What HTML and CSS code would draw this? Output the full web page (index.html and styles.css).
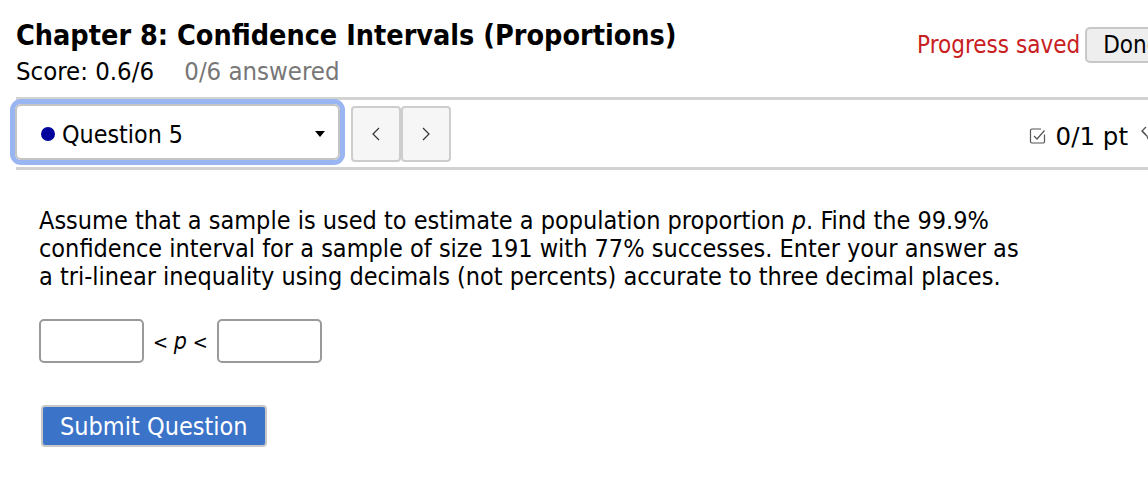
FILE: index.html
```html
<!DOCTYPE html>
<html lang="en">
<head>
  <meta charset="UTF-8">
  <meta name="viewport" content="width=device-width, initial-scale=1.0">
  <title>Chapter 8: Confidence Intervals (Proportions)</title>
  <link rel="stylesheet" href="styles.css">
</head>
<body>
  <div class="page">
    <header class="top">
      <div class="title-block">
        <h1>Chapter 8: Confidence Intervals (Proportions)</h1>
        <div class="score">Score: 0.6/6 <span class="answered">0/6 answered</span></div>
      </div>
      <div class="status">
        <span class="saved">Progress saved</span>
        <button class="done">Done</button>
      </div>
    </header>

    <div class="qbar">
      <div class="qselect">
        <span class="dot"></span>
        <span class="qname">Question 5</span>
        <span class="caret"></span>
      </div>
      <div class="qnav">
        <button class="navbtn" aria-label="Previous">
          <svg width="8" height="14" viewBox="0 0 8 14"><polyline points="7,1 1,7 7,13" fill="none" stroke="#333" stroke-width="1.2"/></svg>
        </button>
        <button class="navbtn" aria-label="Next">
          <svg width="8" height="14" viewBox="0 0 8 14"><polyline points="1,1 7,7 1,13" fill="none" stroke="#333" stroke-width="1.2"/></svg>
        </button>
      </div>
      <div class="points">
        <!-- checkbox icon -->
        <svg class="check" width="18" height="18" viewBox="0 0 18 18">
          <path d="M15.5 7.5 V14.5 A1.5 1.5 0 0 1 14 16 H3 A1.5 1.5 0 0 1 1.5 14.5 V3.5 A1.5 1.5 0 0 1 3 2 H12" fill="none" stroke="#555" stroke-width="1.2"/>
          <polyline points="5,9 8,12 15.5,3.5" fill="none" stroke="#555" stroke-width="1.2"/>
        </svg>
        <span class="pts">0/1 pt</span>
        <!-- retry icon -->
        <svg class="retry" width="20" height="20" viewBox="0 0 20 20">
          <polyline points="6,1 2,5 6,9" fill="none" stroke="#555" stroke-width="1.3"/>
          <path d="M2 5 L7 10 A6 6 0 1 0 16 4" fill="none" stroke="#555" stroke-width="1.3"/>
        </svg>
      </div>
    </div>

    <div class="question">
      <p class="prompt">Assume that a sample is used to estimate a population proportion <i>p</i>. Find the 99.9% confidence interval for a sample of size 191 with 77% successes. Enter your answer as a tri-linear inequality using decimals (not percents) accurate to three decimal places.</p>
      <div class="answer">
        <input type="text" class="box">
        <span class="ineq">&lt; <i>p</i> &lt;</span>
        <input type="text" class="box">
      </div>
      <button class="submit">Submit Question</button>
    </div>
  </div>
</body>
</html>
```

FILE: styles.css
```css
body {
  margin: 0;
  padding: 0;
  background-color: #fff;
  color: #000;
  font-family: "DejaVu Sans Condensed", "DejaVu Sans", sans-serif;
  overflow: hidden;
}

.page {
  margin-left: 16px;
  width: 1162px;
}

/* header */
.top {
  display: flex;
  justify-content: space-between;
  padding: 20px 0 11px 0;
  border-bottom: 3px solid #d2d2d2;
}

.top h1 {
  margin: 0;
  font-size: 28.5px;
  line-height: 32px;
  font-weight: bold;
}

.score {
  margin-top: 4px;
  font-size: 25.5px;
  line-height: 30px;
}

.answered {
  color: #777;
  margin-left: 23px;
}

.status {
  display: flex;
  align-items: center;
  gap: 5px;
  margin-top: 7px;
  align-self: flex-start;
}

.saved {
  color: #c8201e;
  font-size: 24px;
}

.done {
  height: 36px;
  padding: 0 16px;
  font-family: inherit;
  font-size: 24px;
  color: #000;
  background-color: #eee;
  border: 2px solid #c8c8c8;
  border-radius: 5px;
}

/* question bar */
.qbar {
  display: flex;
  align-items: flex-start;
  padding: 4px 0 5px 0;
  border-bottom: 3px solid #d2d2d2;
}

.qselect {
  display: flex;
  align-items: center;
  box-sizing: border-box;
  width: 325px;
  height: 56px;
  margin-left: -1px;
  padding: 4px 13px 0 24px;
  border: 2px solid #c4c4c4;
  border-radius: 6px;
  box-shadow: 0 0 0 5px #9ab6f2;
  font-size: 24.8px;
}

.dot {
  width: 14px;
  height: 14px;
  border-radius: 50%;
  background-color: #00009c;
  margin-right: 7px;
}

.qname {
  flex: 1;
}

.caret {
  width: 0;
  height: 0;
  border-left: 5px solid transparent;
  border-right: 5px solid transparent;
  border-top: 6px solid #000;
}

.qnav {
  display: flex;
  margin-left: 11px;
  margin-top: 2px;
}

.navbtn {
  display: flex;
  align-items: center;
  justify-content: center;
  box-sizing: border-box;
  width: 50px;
  height: 56px;
  padding: 0;
  background-color: #f6f6f6;
  border: 2px solid #cdcdcd;
  border-radius: 4px;
}

.points {
  display: flex;
  align-items: center;
  box-sizing: border-box;
  margin-left: auto;
  height: 58px;
  padding-top: 6px;
}

.check {
  margin-right: 9px;
}

.pts {
  font-family: "DejaVu Sans", sans-serif;
  font-size: 24.5px;
}

.retry {
  margin-left: 12px;
  margin-right: 18px;
}

/* question body */
.question {
  padding-left: 23px;
  margin-top: 37px;
}

.prompt {
  margin: 0;
  width: 985px;
  font-size: 25px;
  line-height: 28px;
}

.answer {
  display: flex;
  align-items: center;
  margin-top: 28px;
}

.box {
  box-sizing: border-box;
  width: 105px;
  height: 44px;
  border: 2px solid #9a9a9a;
  border-radius: 5px;
  background-color: #fff;
}

.ineq {
  margin: 0 9px;
  font-size: 20px;
}

.ineq i {
  font-size: 23px;
}

.submit {
  display: block;
  box-sizing: border-box;
  height: 42px;
  margin: 42px 0 0 2px;
  padding: 0 17px;
  font-family: inherit;
  font-size: 25px;
  color: #fff;
  background-color: #3b73c9;
  border: 2px solid #c8c8c8;
  border-radius: 4px;
}
```
